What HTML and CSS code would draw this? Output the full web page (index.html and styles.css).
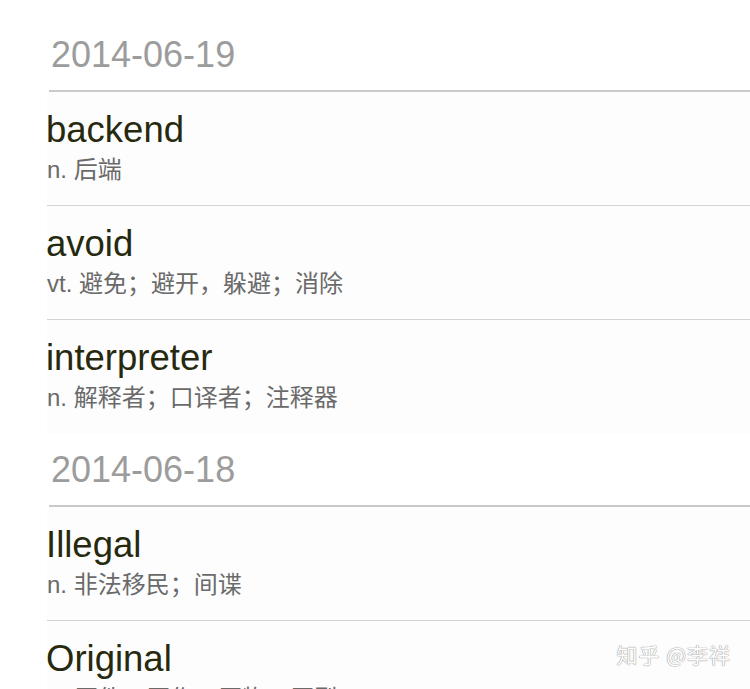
FILE: index.html
```html
<!DOCTYPE html>
<html lang="zh-CN">
<head>
    <meta charset="UTF-8">
    <meta name="viewport" content="width=device-width, initial-scale=1.0">
    <title>生词本</title>
    <link rel="stylesheet" href="styles.css">
</head>
<body>
    <main class="word-list">
        <section class="day">
            <h2 class="day-date">2014-06-19</h2>
            <div class="entry">
                <div class="entry-word">backend</div>
                <div class="entry-def">n. 后端</div>
            </div>
            <div class="entry">
                <div class="entry-word">avoid</div>
                <div class="entry-def">vt. 避免；避开，躲避；消除</div>
            </div>
            <div class="entry last">
                <div class="entry-word">interpreter</div>
                <div class="entry-def">n. 解释者；口译者；注释器</div>
            </div>
        </section>
        <section class="day">
            <h2 class="day-date">2014-06-18</h2>
            <div class="entry">
                <div class="entry-word">Illegal</div>
                <div class="entry-def">n. 非法移民；间谍</div>
            </div>
            <div class="entry last">
                <div class="entry-word">Original</div>
                <div class="entry-def">n. 原件；原作；原物；原型</div>
            </div>
        </section>
    </main>
    <div class="watermark">知乎 @李祥</div>
</body>
</html>
```

FILE: styles.css
```css
html, body { height: 100%; }
body { margin: 0; background-color: #fff; font-family: "Liberation Sans", "Noto Sans CJK SC", sans-serif; overflow: hidden; position: relative; }
.word-list { padding-top: 19px; }
.day-date { margin: 0 0 0 49px; padding: 16px 0 15px 2px; font-size: 36px; line-height: 40px; font-weight: normal; color: #9c9c9c; border-bottom: 2px solid #c9c9c9; }
.entry { margin-left: 47px; padding: 16px 0 17px 0; background-color: #fdfdfd; border-bottom: 1px solid #d4d4d4; }
.entry.last { border-bottom-color: transparent; }
.entry-word { margin-left: -1px; font-size: 36.5px; line-height: 44px; color: #27290f; }
.entry-def { font-size: 24px; line-height: 36px; color: #6a6a6a; }
.watermark { position: absolute; right: 19px; bottom: 23px; font-size: 21px; line-height: 24px; letter-spacing: 1px; color: #fff; text-shadow: 0 0 1px #666, 0 0 1px #666; opacity: 0.75; font-family: "Noto Sans CJK SC", sans-serif; }
```
